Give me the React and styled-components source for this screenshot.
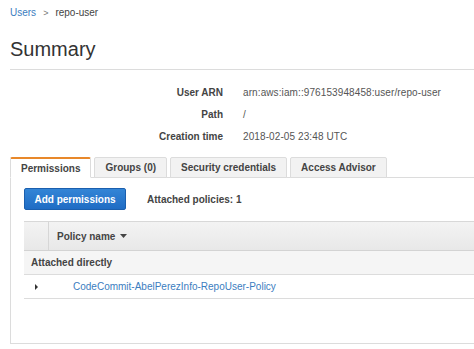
import React from "react";
import styled, { createGlobalStyle } from "styled-components";

const Global = createGlobalStyle`
  html, body { margin: 0; padding: 0; background: #fff; overflow: hidden; }
  body { font-family: "Liberation Sans", Arial, sans-serif; color: #444; }
`;

const Page = styled.div`
  padding: 6px 0 0 10px;
  box-sizing: border-box;
`;

const Breadcrumb = styled.nav`
  display: flex;
  align-items: center;
  gap: 7px;
  font-size: 10px;
  line-height: 14px;
  color: #444;
`;

const Crumb = styled.a`
  color: ${(p) => (p.$link ? "#3b7dc0" : "#444")};
  text-decoration: none;
`;

const Sep = styled.span`
  color: #777;
  font-size: 9px;
`;

const Title = styled.h1`
  margin: 17px 0 0;
  padding-bottom: 8px;
  font-size: 20px;
  line-height: 24px;
  font-weight: normal;
  color: #333;
  border-bottom: 1px solid #dcdcdc;
`;

const Details = styled.dl`
  display: grid;
  grid-template-columns: 213px 1fr;
  column-gap: 20px;
  grid-auto-rows: 22px;
  align-items: center;
  margin: 11px 0 0;
  font-size: 10px;
`;

const Label = styled.dt`
  text-align: right;
  font-weight: bold;
  color: #444;
`;

const Value = styled.dd`
  margin: 0;
  color: #555;
  letter-spacing: 0.1px;
`;

const TabStrip = styled.div`
  display: flex;
  gap: 3px;
  margin-top: 10px;
  border-bottom: 1px solid #dcdcdc;
`;

const Tab = styled.div`
  height: 21px;
  box-sizing: border-box;
  padding: 0 10px;
  margin-bottom: -1px;
  display: flex;
  align-items: center;
  font-size: 10px;
  font-weight: bold;
  color: #444;
  border: 1px solid #dcdcdc;
  border-top: ${(p) => (p.$active ? "2px solid #e8882a" : "1px solid #dcdcdc")};
  border-bottom: ${(p) => (p.$active ? "1px solid #fff" : "1px solid #dcdcdc")};
  background: ${(p) => (p.$active ? "#fff" : "#f2f2f2")};
  border-radius: 2px 2px 0 0;
`;

const Panel = styled.div`
  border-left: 1px solid #dcdcdc;
  border-bottom: 1px solid #dcdcdc;
  padding: 10px 0 44px 13px;
`;

const Toolbar = styled.div`
  display: flex;
  align-items: center;
  gap: 21px;
`;

const PrimaryButton = styled.button`
  height: 22px;
  width: 102px;
  padding: 0;
  font-family: inherit;
  font-size: 10px;
  font-weight: bold;
  color: #fff;
  border: 1px solid #1b5fae;
  border-radius: 2px;
  background: linear-gradient(#3385d6, #1f6cc4);
`;

const ToolbarText = styled.span`
  font-size: 10px;
  font-weight: bold;
  color: #444;
`;

const Table = styled.div`
  margin-top: 11px;
  font-size: 10px;
`;

const HeaderRow = styled.div`
  display: grid;
  grid-template-columns: 24px 1fr;
  height: 30px;
  box-sizing: border-box;
  border-top: 1px solid #d8d8d8;
  border-bottom: 1px solid #d3d3d3;
  background: linear-gradient(#f3f3f3, #e8e8e8);
`;

const HeaderCell = styled.div`
  display: flex;
  align-items: center;
  gap: 5px;
  padding-left: ${(p) => (p.$pad ? "8px" : "0")};
  border-left: ${(p) => (p.$divider ? "1px solid #d6d6d6" : "none")};
  font-weight: bold;
  color: #444;
`;

const GroupRow = styled.div`
  height: 24px;
  box-sizing: border-box;
  display: flex;
  align-items: center;
  padding-left: 7px;
  background: #f5f5f5;
  border-bottom: 1px solid #dcdcdc;
  font-weight: bold;
  color: #444;
`;

const Row = styled.div`
  height: 24px;
  box-sizing: border-box;
  display: grid;
  grid-template-columns: 49px 1fr;
  align-items: center;
  border-bottom: 1px solid #dcdcdc;
`;

const Expander = styled.div`
  display: flex;
  padding-left: 11px;
`;

const PolicyLink = styled.a`
  color: #3b7dc0;
  text-decoration: none;
`;

const Caret = () => (
  <svg width="7" height="4" viewBox="0 0 7 4">
    <path d="M0 0h7L3.5 4z" fill="#444" />
  </svg>
);

const RightArrow = () => (
  <svg width="3" height="6" viewBox="0 0 3 6">
    <path d="M0 0l3 3-3 3z" fill="#333" />
  </svg>
);

export default function App() {
  return (
    <>
      <Global />
      <Page>
        <Breadcrumb>
          <Crumb $link href="#">Users</Crumb>
          <Sep>&gt;</Sep>
          <Crumb>repo-user</Crumb>
        </Breadcrumb>
        <Title>Summary</Title>
        <Details>
          <Label>User ARN</Label>
          <Value>arn:aws:iam::976153948458:user/repo-user</Value>
          <Label>Path</Label>
          <Value>/</Value>
          <Label>Creation time</Label>
          <Value>2018-02-05 23:48 UTC</Value>
        </Details>
        <TabStrip>
          <Tab $active>Permissions</Tab>
          <Tab>Groups (0)</Tab>
          <Tab>Security credentials</Tab>
          <Tab>Access Advisor</Tab>
        </TabStrip>
        <Panel>
          <Toolbar>
            <PrimaryButton>Add permissions</PrimaryButton>
            <ToolbarText>Attached policies: 1</ToolbarText>
          </Toolbar>
          <Table>
            <HeaderRow>
              <HeaderCell />
              <HeaderCell $divider $pad>
                Policy name <Caret />
              </HeaderCell>
            </HeaderRow>
            <GroupRow>Attached directly</GroupRow>
            <Row>
              <Expander>
                <RightArrow />
              </Expander>
              <PolicyLink href="#">CodeCommit-AbelPerezInfo-RepoUser-Policy</PolicyLink>
            </Row>
          </Table>
        </Panel>
      </Page>
    </>
  );
}
